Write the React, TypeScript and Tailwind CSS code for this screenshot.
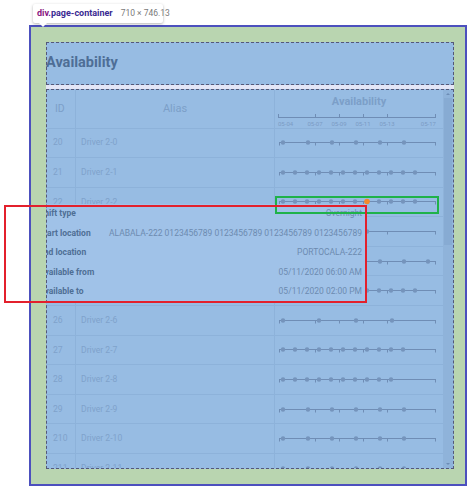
import React from "react";

const A = [8, 33, 57, 81, 105, 129];
const B = Array.from({ length: 12 }, (_, i) => 8 + i * 12);

type Row = { id: string; alias: string; dots: number[]; orange?: number };

const rows: Row[] = [
  { id: "20", alias: "Driver 2-0", dots: A },
  { id: "21", alias: "Driver 2-1", dots: B },
  { id: "22", alias: "Driver 2-2", dots: B.filter((x) => x !== 92), orange: 92 },
  { id: "23", alias: "Driver 2-3", dots: [8, 33, 57, 92] },
  { id: "24", alias: "Driver 2-4", dots: [9, 33, 57, 81, 105, 129, 153] },
  { id: "25", alias: "Driver 2-5", dots: B },
  { id: "26", alias: "Driver 2-6", dots: [8, 44, 81, 117] },
  { id: "27", alias: "Driver 2-7", dots: B.slice(0, 11) },
  { id: "28", alias: "Driver 2-8", dots: B.slice(0, 10) },
  { id: "29", alias: "Driver 2-9", dots: A },
  { id: "210", alias: "Driver 2-10", dots: A },
  { id: "211", alias: "Driver 2-11", dots: A },
];

function Timeline({ dots, orange }: { dots: number[]; orange?: number }) {
  return (
    <svg width="168" height="29" viewBox="0 0 168 29" className="block">
      <path
        d="M4 14.5 H161 M4.5 14.5 V17.5 M160.5 14.5 V17.5 M40.5 14.5 V17.5 M64.5 14.5 V17.5 M88.5 14.5 V17.5 M112.5 14.5 V17.5"
        stroke="#6f8db5"
        strokeWidth="1"
        fill="none"
      />
      {dots.map((x) => (
        <circle key={x} cx={x} cy={14.5} r={2.2} fill="#7594bc" />
      ))}
      {orange !== undefined && <circle cx={orange} cy={14.5} r={2.8} fill="#f38a2c" />}
    </svg>
  );
}

function Axis() {
  const ticks = [3.5, 40.5, 64.5, 88.5, 112.5, 160.5];
  return (
    <svg width="168" height="38" viewBox="0 0 168 38" className="block">
      <path
        d={"M3 27.5 H161 " + ticks.map((t) => `M${t} 27.5 V24`).join(" ")}
        stroke="#6f8db5"
        strokeWidth="1"
        fill="none"
      />
      <g fill="#7b9bc4" fontSize="6" fontFamily="Roboto, sans-serif">
        <text x="3" y="35.5">05-04</text>
        <text x="40" y="35.5" textAnchor="middle">05-07</text>
        <text x="64" y="35.5" textAnchor="middle">05-09</text>
        <text x="88" y="35.5" textAnchor="middle">05-11</text>
        <text x="112" y="35.5" textAnchor="middle">05-13</text>
        <text x="161" y="35.5" textAnchor="end">05-17</text>
      </g>
    </svg>
  );
}

const popupRows: [string, string][] = [
  ["Shift type", "Overnight"],
  ["Start location", "ALABALA-222 0123456789 0123456789 0123456789 0123456789"],
  ["End location", "PORTOCALA-222"],
  ["Available from", "05/11/2020 06:00 AM"],
  ["Available to", "05/11/2020 02:00 PM"],
];

export default function App() {
  return (
    <div
      className="relative w-[474px] h-[488px] bg-white overflow-hidden"
      style={{ fontFamily: "Roboto, 'Liberation Sans', sans-serif" }}
    >
      {/* devtools label */}
      <div className="absolute left-[33px] top-[4px] h-[19px] w-[130px] bg-white rounded-[2px] shadow-[0_1px_3px_rgba(0,0,0,0.3)] flex items-center gap-[8px] pl-[4px] whitespace-nowrap z-20">
        <span className="text-[9px] font-bold leading-none whitespace-nowrap">
          <span className="text-[#881280]">div</span>
          <span className="text-[#3a2a92]">.page-container</span>
        </span>
        <span className="text-[8.5px] leading-none text-[#7a7a7a] whitespace-nowrap">710 × 746.13</span>
        <div className="absolute left-[6px] -bottom-[4px] w-0 h-0 border-l-[4px] border-r-[4px] border-t-[4px] border-l-transparent border-r-transparent border-t-white" />
      </div>

      {/* page container */}
      <div className="ml-[29px] mt-[25px] w-[438px] h-[461px] border-2 border-[#4c50be] bg-[#b9d5b0] pt-[15px] pl-[15px]">
        <div className="w-[408px] h-[427px] bg-[#97bce3] flex flex-col">
          <div className="h-[43px] border border-dashed border-[#545879] flex items-center">
            <span className="text-[14.5px] font-bold text-[#4e6e96] leading-none -ml-[1px]">Availability</span>
          </div>
          <div className="h-[4px] bg-[#e4e6f6]" />
          <div className="relative flex-1 border border-dashed border-[#545879] overflow-hidden flex">
            <div className="w-[396px] flex flex-col">
              {/* header */}
              <div className="h-[38.5px] shrink-0 flex border-b border-[#8db2da]">
                <div className="w-[29px] border-r border-[#8db2da] flex items-center pl-[8px] text-[10.5px] text-[#7c9fc8]">
                  ID
                </div>
                <div className="w-[199px] border-r border-[#8db2da] flex items-center justify-center text-[11px] text-[#7c9fc8]">
                  Alias
                </div>
                <div className="w-[168px] relative">
                  <div className="absolute top-[6px] left-0 right-0 text-center text-[11px] font-bold text-[#7c9fc8] leading-none">
                    Availability
                  </div>
                  <Axis />
                </div>
              </div>
              {rows.map((r) => (
                <div key={r.id} className="h-[29.6px] shrink-0 flex border-b border-[#8db2da]">
                  <div className="w-[29px] border-r border-[#8db2da] flex items-center pl-[6px] text-[8.6px] text-[#7fa2cb]">
                    {r.id}
                  </div>
                  <div className="w-[199px] border-r border-[#8db2da] flex items-center pl-[5px] text-[8.6px] text-[#7fa2cb]">
                    {r.alias}
                  </div>
                  <div className="w-[168px] flex items-center">
                    <Timeline dots={r.dots} orange={r.orange} />
                  </div>
                </div>
              ))}
            </div>
            {/* scrollbar */}
            <div className="w-[10px] bg-[#8fb3da] flex flex-col items-center">
              <div className="h-[8px] flex items-center">
                <div className="w-0 h-0 border-l-[2px] border-r-[2px] border-b-[2px] border-l-transparent border-r-transparent border-b-[#6d8db5]" />
              </div>
              <div className="w-[8px] h-[147px] bg-[#87abd3]" />
              <div className="flex-1" />
              <div className="h-[8px] flex items-center">
                <div className="w-0 h-0 border-l-[2px] border-r-[2px] border-t-[2px] border-l-transparent border-r-transparent border-t-[#6d8db5]" />
              </div>
            </div>

            {/* popup */}
            <div className="absolute left-[-8px] top-[115px] w-[327px] h-[97px] bg-[#a0c2e8] flex flex-col pr-[4px] -mt-[1px]">
              {popupRows.map(([k, v]) => (
                <div key={k} className="h-[19.6px] flex items-center justify-between text-[8.5px] leading-none">
                  <span className="font-bold text-[#4f6f95] whitespace-nowrap">{k}</span>
                  <span className="text-[#6d8bb0] whitespace-nowrap">{v}</span>
                </div>
              ))}
            </div>
          </div>
        </div>
      </div>

      {/* highlight overlays */}
      <div className="absolute left-[275px] top-[196px] w-[164px] h-[18px] border-2 border-[#1fb24a]" />
      <div className="absolute left-[4px] top-[205px] w-[363px] h-[98px] border-2 border-[#e3202c]" />
    </div>
  );
}
